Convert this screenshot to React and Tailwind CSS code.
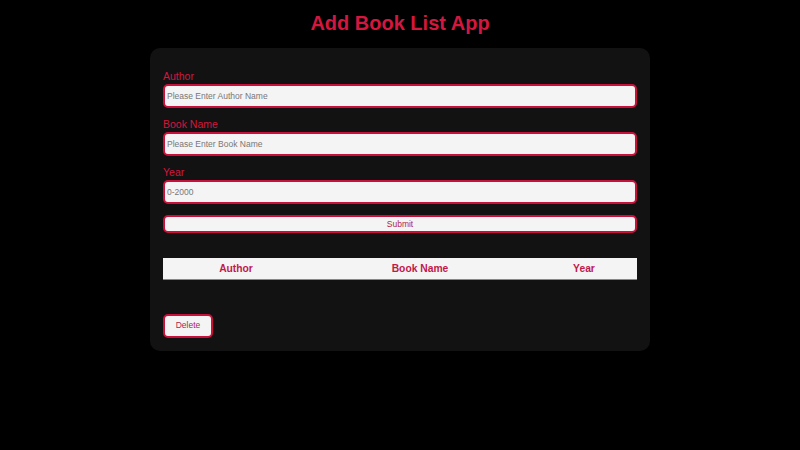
import { useState } from "react";

const Field = ({ label, placeholder, value, onChange }) => (
  <div className="flex flex-col">
    <label className="text-[10.5px] leading-[16px] text-[#d3173f]">{label}</label>
    <input
      value={value}
      onChange={(e) => onChange(e.target.value)}
      placeholder={placeholder}
      className="h-[24px] w-full rounded-[5px] border-2 border-[#c8103a] bg-[#f4f4f4] px-[2px] text-[8.5px] text-[#333] outline-none placeholder:text-[#777]"
    />
  </div>
);

const App = () => {
  const [author, setAuthor] = useState("");
  const [bookName, setBookName] = useState("");
  const [year, setYear] = useState("");
  const [books, setBooks] = useState([]);

  const handleSubmit = (e) => {
    e.preventDefault();
    if (!author || !bookName || !year) return;
    setBooks([...books, { author, bookName, year }]);
    setAuthor("");
    setBookName("");
    setYear("");
  };

  return (
    <div className="min-h-[450px] bg-black pt-[10px] font-['Liberation_Sans',Arial,sans-serif]">
      <h1 className="text-center text-[20px] font-bold leading-[26px] text-[#d3173f]">
        Add Book List App
      </h1>

      <div className="mx-auto mt-[12px] w-[500px] rounded-[10px] bg-[#121212] px-[13px] pt-[20px] pb-[13px]">
        <form onSubmit={handleSubmit} className="flex flex-col gap-[8px]">
          <Field label="Author" placeholder="Please Enter Author Name" value={author} onChange={setAuthor} />
          <Field label="Book Name" placeholder="Please Enter Book Name" value={bookName} onChange={setBookName} />
          <Field label="Year" placeholder="0-2000" value={year} onChange={setYear} />
          <button
            type="submit"
            className="mt-[3px] h-[18px] w-full rounded-[5px] border-2 border-[#c8103a] bg-[#f4f4f4] text-[8.5px] leading-none text-[#b01e4e]"
          >
            Submit
          </button>
        </form>

        <table className="mt-[25px] w-full border-collapse">
          <thead>
            <tr className="h-[21px] bg-[#f4f4f4] border-b border-[#888]">
              <th className="w-[146px] text-center text-[10.3px] font-bold text-[#c2184a]">Author</th>
              <th className="w-[222px] text-center text-[10.3px] font-bold text-[#c2184a]">Book Name</th>
              <th className="text-center text-[10.3px] font-bold text-[#c2184a]">Year</th>
            </tr>
          </thead>
          <tbody>
            {books.map((book, i) => (
              <tr key={i} className="text-[10px] text-white">
                <td className="text-center">{book.author}</td>
                <td className="text-center">{book.bookName}</td>
                <td className="text-center">{book.year}</td>
              </tr>
            ))}
          </tbody>
        </table>

        <button
          onClick={() => setBooks([])}
          className="mt-[34px] h-[24px] w-[50px] rounded-[5px] border-2 border-[#c8103a] bg-[#f4f4f4] text-[8.5px] text-[#b01e4e]"
        >
          Delete
        </button>
      </div>
    </div>
  );
};

export default App;
